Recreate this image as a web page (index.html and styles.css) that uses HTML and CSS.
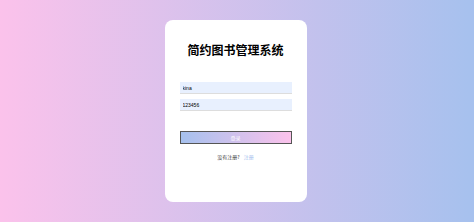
FILE: index.html
```html
<!DOCTYPE html>
<html lang="zh">

<head>
    <meta charset="UTF-8">
    <meta name="viewport" content="width=device-width, initial-scale=1.0">
    <title>简约图书管理系统</title>
    <link rel="stylesheet" href="styles.css">
</head>

<body>
    <div class="container">
        <h1 class="title">简约图书管理系统</h1>
        <div class="inputContainer">
            <input type="text" value="kina" id="username">
            <input type="text" value="123456" id="password">
        </div>
        <button id="login">登录</button>
        <div class="register">没有注册? <a href="#">注册</a></div>
    </div>
</body>

</html>
```

FILE: styles.css
```css
* {
    box-sizing: border-box;
}

body {
    margin: 0;
    height: 222px;
    display: flex;
    align-items: center;
    justify-content: center;
    background: linear-gradient(to right, #fbc2eb, #a6c1ee);
    font-family: "Noto Sans CJK SC", "Noto Sans", sans-serif;
}

.container {
    width: 142px;
    height: 182px;
    margin-left: -3px;
    background-color: white;
    border-radius: 8px;
    padding: 0 15px;
    display: flex;
    flex-direction: column;
}

.title {
    margin: 22px 0 0;
    font-size: 12px;
    line-height: 16px;
    white-space: nowrap;
    text-align: center;
    font-weight: bold;
    color: #000;
}

.inputContainer {
    margin-top: 24px;
    display: flex;
    flex-direction: column;
    gap: 5px;
}

.inputContainer input {
    width: 100%;
    height: 12px;
    padding: 0 3px;
    border: none;
    border-bottom: 1px solid #ddd;
    background-color: #e8f0fe;
    font-size: 5px;
    font-family: "Liberation Sans", sans-serif;
    color: #000;
    outline: none;
}

#login {
    margin-top: 20px;
    height: 13px;
    width: 100%;
    padding: 0;
    border: 1px solid #555;
    background: linear-gradient(to right, #a6c1ee, #fbc2eb);
    color: white;
    font-size: 5px;
    font-family: "Noto Sans CJK SC", sans-serif;
}

.register {
    margin-top: 9px;
    text-align: center;
    font-size: 5px;
    color: #444;
}

.register a {
    color: #a6c1ee;
    text-decoration: none;
    margin-left: 3px;
}
```
